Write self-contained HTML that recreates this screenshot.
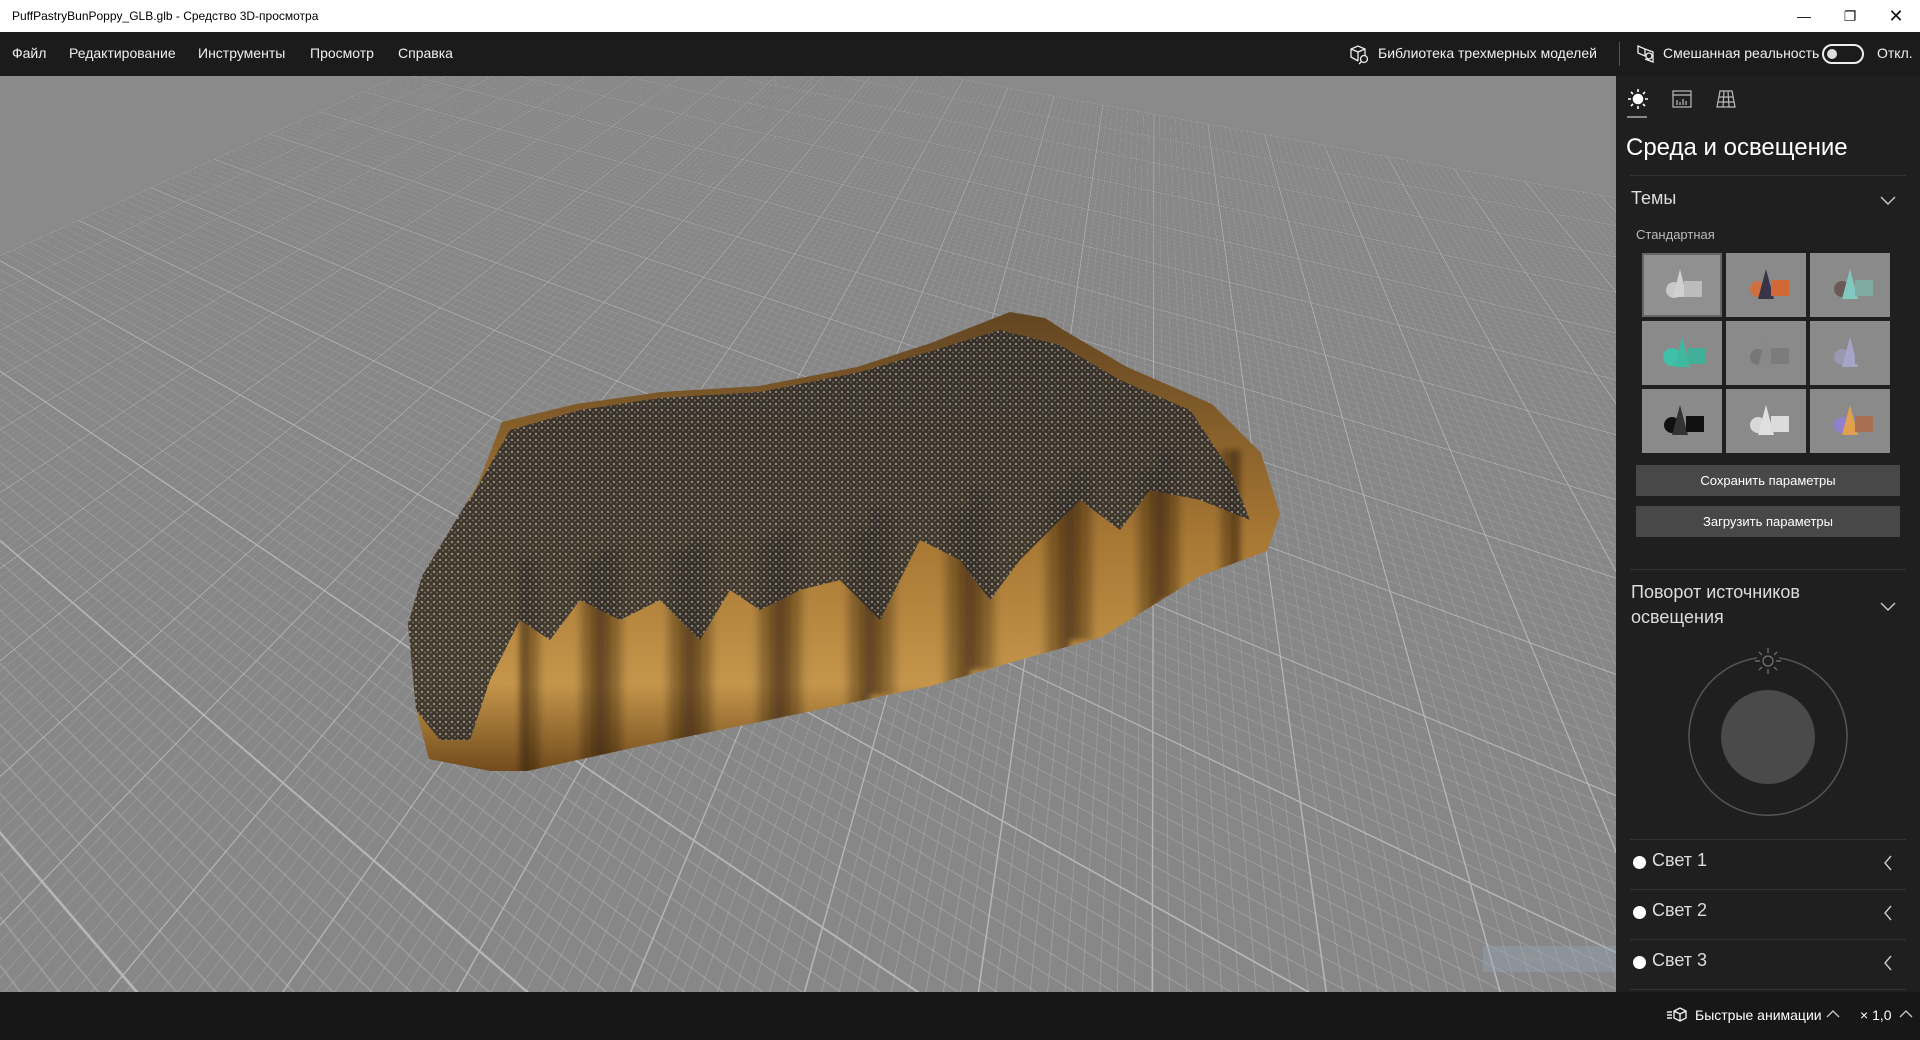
<!DOCTYPE html>
<html><head><meta charset="utf-8">
<style>
*{margin:0;padding:0;box-sizing:border-box}
body{width:1920px;height:1040px;overflow:hidden;background:#1f1f1f;font-family:"Segoe UI","Liberation Sans","DejaVu Sans",sans-serif;color:#fff;position:relative}
.title{position:absolute;left:0;top:0;width:1920px;height:32px;background:#fff;color:#000;font-size:12px;line-height:32px;padding-left:12px}
.wc{position:absolute;top:0;height:32px;width:46px;text-align:center;line-height:32px;color:#111;font-size:14px}
.menu{position:absolute;left:0;top:32px;width:1920px;height:44px;background:#1b1b1b;font-size:14px}
.menu span{position:absolute;top:13px;color:#f0f0f0}
.vp{position:absolute;left:0;top:76px;width:1616px;height:916px;background:#8a8a8a;overflow:hidden;perspective:700px;perspective-origin:50% 0%}
.plane{position:absolute;left:-2400px;top:-2400px;width:6400px;height:6400px;
background-color:#878787;
background-image:
linear-gradient(#b8b8b8 2px,transparent 2px),
linear-gradient(90deg,#b8b8b8 2px,transparent 2px),
linear-gradient(rgba(170,170,170,.8) 1px,transparent 1px),
linear-gradient(90deg,rgba(170,170,170,.8) 1px,transparent 1px);
background-size:220px 220px,220px 220px,22px 22px,22px 22px;
transform:translateY(600px) rotateX(64deg) rotateZ(24deg)}
.panel{position:absolute;left:1616px;top:76px;width:304px;height:916px;background:#1f1f1f}
.bottom{position:absolute;left:0;top:992px;width:1920px;height:48px;background:#171717}
.sep{position:absolute;left:1630px;width:276px;height:1px;background:#333}
.t{position:absolute;white-space:nowrap}
.btn{position:absolute;left:1636px;width:264px;height:31px;background:#484848;font-size:13px;text-align:center;line-height:31px}
.tile{position:absolute;width:80px;height:64px;background:#8a8a8a}
</style></head><body>
<div class="title">PuffPastryBunPoppy_GLB.glb - Средство 3D-просмотра</div>
<div class="wc" style="left:1781px">&#8212;</div>
<div class="wc" style="left:1827px">&#10064;</div>
<div class="wc" style="left:1873px;font-size:18px">&#10005;</div>
<div class="menu">
<span style="left:12px">Файл</span><span style="left:69px">Редактирование</span><span style="left:198px">Инструменты</span><span style="left:310px">Просмотр</span><span style="left:398px">Справка</span>
<svg style="position:absolute;left:1349px;top:12px" width="22" height="22" viewBox="0 0 22 22" fill="none" stroke="#eee" stroke-width="1.3"><path d="M9 2 L16 5 L16 12 M9 2 L2 5 L2 13 L9 17 M2 5 L9 8 L16 5 M9 8 L9 17"/><circle cx="15" cy="15" r="3.5"/><path d="M12.5 17.5 L10 20"/></svg>
<span style="left:1378px;font-size:14px">Библиотека трехмерных моделей</span>
<div style="position:absolute;left:1619px;top:10px;width:1px;height:24px;background:#555"></div>
<svg style="position:absolute;left:1635px;top:11px" width="22" height="22" viewBox="0 0 22 22" fill="none" stroke="#eee" stroke-width="1.3"><path d="M3 3 L10 6 L10 13 L3 10 Z M10 6 L18 9 L18 19 L10 16"/><circle cx="14" cy="13" r="3"/></svg>
<span style="left:1663px;font-size:14px">Смешанная реальность</span>
<div style="position:absolute;left:1822px;top:12px;width:42px;height:20px;border:2px solid #eee;border-radius:10px"><div style="position:absolute;left:3px;top:3px;width:10px;height:10px;border-radius:5px;background:#ddd"></div></div>
<span style="left:1877px;font-size:14px">Откл.</span>
</div>
<div class="vp"><div class="plane"></div>
<svg style="position:absolute;left:0;top:-76px" width="1616" height="1000" viewBox="0 0 1616 1000">
<defs>
<linearGradient id="bg1" x1="0" y1="0" x2="0" y2="1"><stop offset="0" stop-color="#5e4220"/><stop offset=".5" stop-color="#a87834"/><stop offset=".8" stop-color="#c4954a"/><stop offset="1" stop-color="#6a4418"/></linearGradient>
<linearGradient id="rib" x1="0" y1="0" x2="1" y2="0"><stop offset="0" stop-color="#3a2410" stop-opacity=".7"/><stop offset=".3" stop-color="#000" stop-opacity="0"/><stop offset=".7" stop-color="#000" stop-opacity="0"/><stop offset="1" stop-color="#3a2410" stop-opacity=".7"/></linearGradient>
<pattern id="seed" width="6" height="6" patternUnits="userSpaceOnUse"><rect width="6" height="6" fill="#2e2a28"/><circle cx="2" cy="2" r="1.2" fill="#8a9292"/><circle cx="5" cy="4.5" r="1" fill="#666c6c"/></pattern>
<filter id="bl"><feGaussianBlur stdDeviation="3"/></filter>
<clipPath id="bc"><path id="bp" d="M408 624 L422 576 L478 484 L502 422 L576 404 L661 392 L759 386 L857 367 L931 343 L1010 312 L1045 318 L1065 331 L1127 367 L1212 404 L1261 453 L1280 514 L1267 551 L1200 576 L1102 637 L1016 661 L931 686 L759 722 L637 747 L527 771 L490 771 L429 759 L416 710 Z"/></clipPath>
</defs>
<g clip-path="url(#bc)">
<rect x="400" y="300" width="900" height="480" fill="url(#bg1)"/>
<g filter="url(#bl)">
<rect x="520" y="560" width="80" height="220" fill="url(#rib)"/>
<rect x="600" y="550" width="90" height="210" fill="url(#rib)"/>
<rect x="690" y="540" width="90" height="200" fill="url(#rib)"/>
<rect x="780" y="530" width="90" height="190" fill="url(#rib)"/>
<rect x="870" y="510" width="100" height="185" fill="url(#rib)"/>
<rect x="970" y="490" width="100" height="180" fill="url(#rib)"/>
<rect x="1070" y="470" width="90" height="170" fill="url(#rib)"/>
<rect x="1160" y="450" width="80" height="150" fill="url(#rib)"/>
</g>
<path d="M400 560 L470 500 L510 430 L580 410 L660 398 L760 392 L860 372 L935 350 L1000 330 L1060 345 L1120 380 L1190 410 L1230 470 L1250 520 L1200 500 L1150 490 L1120 530 L1080 500 L1020 560 L990 600 L960 560 L920 540 L880 620 L840 580 L800 590 L760 610 L730 590 L700 640 L660 600 L620 620 L580 600 L550 640 L520 620 L490 680 L470 740 L440 740 L400 690 Z" fill="url(#seed)" opacity=".85"/>
</g>
</svg>
<div style="position:absolute;left:1483px;top:870px;width:205px;height:26px;background:rgba(150,170,190,.35);color:#999;font-size:12px;padding:5px 0 0 35px">Окно</div>
</div>
<div class="panel"></div>
<svg style="position:absolute;left:1627px;top:88px" width="22" height="22" viewBox="0 0 22 22" stroke="#fff" stroke-width="1.6" fill="none"><circle cx="11" cy="11" r="4.5" fill="#fff"/><path d="M11 1v3M11 18v3M1 11h3M18 11h3M4 4l2 2M16 16l2 2M4 18l2-2M16 6l2-2"/></svg>
<div style="position:absolute;left:1627px;top:116px;width:20px;height:2px;background:#888"></div>
<svg style="position:absolute;left:1672px;top:89px" width="20" height="20" viewBox="0 0 20 20" stroke="#bbb" stroke-width="1.2" fill="none"><rect x="1" y="2" width="18" height="16"/><path d="M1 6h18M5 16v-5M8 16v-3M11 16v-6M14 16v-4"/></svg>
<svg style="position:absolute;left:1716px;top:89px" width="20" height="20" viewBox="0 0 20 20" stroke="#bbb" stroke-width="1.2" fill="none"><path d="M4 2h12l3 16H1Z M2.5 8h15 M2 13h16 M8 2l-1 16 M12 2l1 16"/></svg>
<div class="t" style="left:1626px;top:134px;font-size:24px;font-weight:300">Среда и освещение</div>
<div class="sep" style="top:175px"></div>
<div class="t" style="left:1631px;top:188px;font-size:18px;color:#ddd">Темы</div>
<svg style="position:absolute;left:1880px;top:194px" width="16" height="12" viewBox="0 0 16 12" stroke="#ccc" stroke-width="1.4" fill="none"><path d="M1 3l7 7 7-7"/></svg>
<div class="t" style="left:1636px;top:227px;font-size:13px;color:#bbb">Стандартная</div>
<div class="tile" style="left:1642px;top:253px;border:2px solid #666;background:#909090"><svg width="76" height="60"><circle cx="30" cy="35" r="8" fill="#c8c8c8"/><path d="M36 14 L29 42 L43 42Z" fill="#d0d0d0"/><rect x="40" y="26" width="18" height="16" fill="#bcbcbc"/></svg></div>
<div class="tile" style="left:1726px;top:253px"><svg width="80" height="64"><circle cx="32" cy="36" r="8" fill="#d07040"/><path d="M40 16 L32 46 L48 46Z" fill="#3a3448"/><rect x="45" y="27" width="18" height="16" fill="#d06838"/></svg></div>
<div class="tile" style="left:1810px;top:253px"><svg width="80" height="64"><circle cx="32" cy="36" r="8" fill="#6a5a55"/><path d="M40 16 L32 46 L48 46Z" fill="#80c8c0"/><rect x="45" y="27" width="18" height="16" fill="#80aaa4"/></svg></div>
<div class="tile" style="left:1642px;top:321px"><svg width="80" height="64"><circle cx="30" cy="36" r="9" fill="#40c0a8"/><path d="M40 16 L32 46 L48 46Z" fill="#40b8a0"/><rect x="45" y="27" width="18" height="16" fill="#40b098"/></svg></div>
<div class="tile" style="left:1726px;top:321px"><svg width="80" height="64"><circle cx="32" cy="36" r="8" fill="#777"/><path d="M40 16 L32 46 L48 46Z" fill="#888"/><rect x="45" y="27" width="18" height="16" fill="#7c7c7c"/></svg></div>
<div class="tile" style="left:1810px;top:321px"><svg width="80" height="64"><circle cx="32" cy="36" r="8" fill="#9a98b0"/><path d="M40 16 L32 46 L48 46Z" fill="#a8a4c8"/><rect x="45" y="27" width="18" height="16" fill="#8a8a8a"/></svg></div>
<div class="tile" style="left:1642px;top:389px"><svg width="80" height="64"><circle cx="30" cy="36" r="8" fill="#111"/><path d="M38 16 L30 46 L46 46Z" fill="#333"/><rect x="44" y="27" width="18" height="16" fill="#111"/></svg></div>
<div class="tile" style="left:1726px;top:389px"><svg width="80" height="64"><circle cx="32" cy="36" r="8" fill="#d8d8d8"/><path d="M40 16 L32 46 L48 46Z" fill="#e0e0e0"/><rect x="45" y="27" width="18" height="16" fill="#dcdcdc"/></svg></div>
<div class="tile" style="left:1810px;top:389px"><svg width="80" height="64"><circle cx="32" cy="36" r="8" fill="#9080d0"/><path d="M40 16 L32 46 L48 46Z" fill="#e0a050"/><rect x="45" y="27" width="18" height="16" fill="#a87050"/></svg></div>
<div class="btn" style="top:465px">Сохранить параметры</div>
<div class="btn" style="top:506px">Загрузить параметры</div>
<div class="sep" style="top:569px"></div>
<div class="t" style="left:1631px;top:580px;font-size:18px;line-height:25px;color:#ddd">Поворот источников<br>освещения</div>
<svg style="position:absolute;left:1880px;top:600px" width="16" height="12" viewBox="0 0 16 12" stroke="#ccc" stroke-width="1.4" fill="none"><path d="M1 3l7 7 7-7"/></svg>
<svg style="position:absolute;left:1680px;top:640px" width="176" height="180" viewBox="0 0 176 180">
<path d="M77 18 A79 79 0 1 0 99 18" stroke="#555" stroke-width="1.5" fill="none"/>
<circle cx="88" cy="97" r="47" fill="#4a4a4a"/>
<g stroke="#777" stroke-width="1.2" fill="none"><circle cx="88" cy="21" r="5"/><path d="M88 8v5M88 29v5M75 21h5M96 21h5M79 12l3 3M94 27l3 3M79 30l3-3M94 15l3-3"/></g>
</svg>
<div class="sep" style="top:839px"></div>
<div class="sep" style="top:889px"></div>
<div class="sep" style="top:939px"></div>
<div class="sep" style="top:989px"></div>
<div style="position:absolute;left:1633px;top:856px;width:13px;height:13px;border-radius:50%;background:#fff"></div>
<div class="t" style="left:1652px;top:850px;font-size:18px;color:#ddd">Свет 1</div>
<div style="position:absolute;left:1633px;top:906px;width:13px;height:13px;border-radius:50%;background:#fff"></div>
<div class="t" style="left:1652px;top:900px;font-size:18px;color:#ddd">Свет 2</div>
<div style="position:absolute;left:1633px;top:956px;width:13px;height:13px;border-radius:50%;background:#fff"></div>
<div class="t" style="left:1652px;top:950px;font-size:18px;color:#ddd">Свет 3</div>
<svg style="position:absolute;left:1883px;top:855px" width="10" height="16" viewBox="0 0 10 16" stroke="#ccc" stroke-width="1.4" fill="none"><path d="M8 1L2 8l6 7"/></svg>
<svg style="position:absolute;left:1883px;top:905px" width="10" height="16" viewBox="0 0 10 16" stroke="#ccc" stroke-width="1.4" fill="none"><path d="M8 1L2 8l6 7"/></svg>
<svg style="position:absolute;left:1883px;top:955px" width="10" height="16" viewBox="0 0 10 16" stroke="#ccc" stroke-width="1.4" fill="none"><path d="M8 1L2 8l6 7"/></svg>
<div class="bottom">
<svg style="position:absolute;left:1666px;top:14px" width="22" height="18" viewBox="0 0 22 18" stroke="#eee" stroke-width="1.4" fill="none"><path d="M1 6h5M1 9h5M1 12h5M14 2l6 3v7l-6 3-6-3V5Z M8 5l6 3 6-3 M14 8v7"/></svg>
<span class="t" style="left:1695px;top:15px;font-size:14px">Быстрые анимации</span>
<svg style="position:absolute;left:1826px;top:17px" width="14" height="10" viewBox="0 0 14 10" stroke="#ccc" stroke-width="1.3" fill="none"><path d="M1 8l6-6 6 6"/></svg>
<span class="t" style="left:1860px;top:15px;font-size:14px">× 1,0</span>
<svg style="position:absolute;left:1899px;top:17px" width="14" height="10" viewBox="0 0 14 10" stroke="#ccc" stroke-width="1.3" fill="none"><path d="M1 8l6-6 6 6"/></svg>
</div>
</body></html>
